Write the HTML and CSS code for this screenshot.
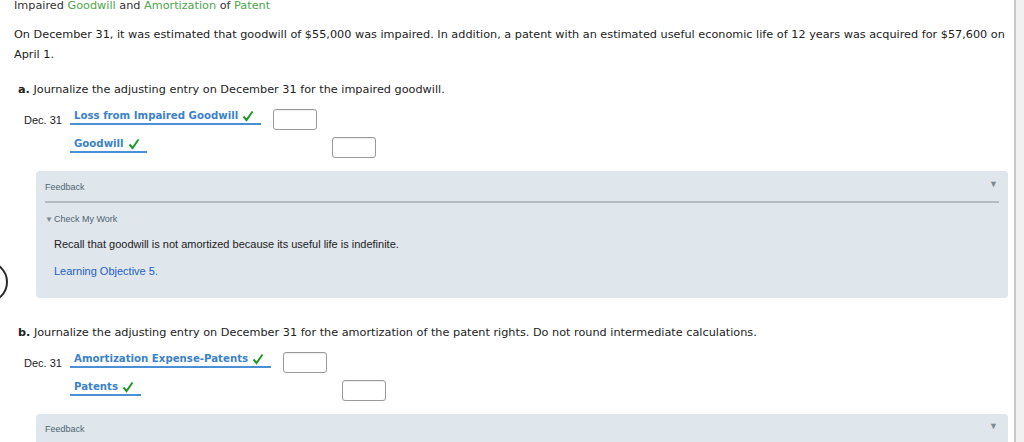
FILE: index.html
```html
<!DOCTYPE html>
<html>
<head>
<meta charset="utf-8">
<link rel="stylesheet" href="styles.css">
</head>
<body>
<div class="page">
  <div class="ring"></div>
  <div class="content">
    <h1 class="title">Impaired <span class="kw">Goodwill</span> and <span class="kw">Amortization</span> of <span class="kw">Patent</span></h1>
    <p class="intro">On December 31, it was estimated that goodwill of $55,000 was impaired. In addition, a patent with an estimated useful economic life of 12 years was acquired for $57,600 on April 1.</p>

    <p class="question"><b>a.</b> Journalize the adjusting entry on December 31 for the impaired goodwill.</p>
    <div class="journal">
      <div class="date">Dec. 31</div>
      <div class="acct">Loss from Impaired Goodwill <svg class="check" viewBox="0 0 12 12"><path d="M1.5 6.5 L4.5 10 L10.5 1.5" /></svg></div>
      <div class="box debit"></div>
      <div class="date"></div>
      <div class="acct">Goodwill <svg class="check" viewBox="0 0 12 12"><path d="M1.5 6.5 L4.5 10 L10.5 1.5" /></svg></div>
      <div class="box credit"></div>
    </div>

    <div class="feedback">
      <div class="fb-head"><span>Feedback</span><span class="tri">▼</span></div>
      <div class="fb-body">
        <div class="cmw"><span class="tri-s">▼</span>Check My Work</div>
        <p class="fb-text">Recall that goodwill is not amortized because its useful life is indefinite.</p>
        <p class="fb-link">Learning Objective 5.</p>
      </div>
    </div>

    <p class="question q-b"><b>b.</b> Journalize the adjusting entry on December 31 for the amortization of the patent rights. Do not round intermediate calculations.</p>
    <div class="journal journal-b">
      <div class="date">Dec. 31</div>
      <div class="acct">Amortization Expense-Patents <svg class="check" viewBox="0 0 12 12"><path d="M1.5 6.5 L4.5 10 L10.5 1.5" /></svg></div>
      <div class="box debit"></div>
      <div class="date"></div>
      <div class="acct">Patents <svg class="check" viewBox="0 0 12 12"><path d="M1.5 6.5 L4.5 10 L10.5 1.5" /></svg></div>
      <div class="box credit"></div>
    </div>

    <div class="feedback feedback-2">
      <div class="fb-head"><span>Feedback</span><span class="tri">▼</span></div>
    </div>
  </div>
</div>
</body>
</html>
```

FILE: styles.css
```css
html { background: #f1f1f1; }
body {
  margin: 0;
  font-family: "DejaVu Sans", Verdana, sans-serif;
  font-size: 11.25px;
  color: #222;
  overflow: hidden;
  height: 442px;
}
.page {
  position: relative;
  width: 1014px;
  height: 442px;
  background: #fff;
  border-right: 2px solid #c9c9c9;
  overflow: hidden;
}
.ring {
  position: absolute;
  left: -34px;
  top: 261px;
  width: 38px;
  height: 38px;
  border: 2px solid #2a2a2a;
  border-radius: 50%;
}
.content {
  padding: 0 6px 0 14px;
}
.title {
  margin: 0;
  font-size: 11.25px;
  font-weight: normal;
  line-height: 12px;
  color: #333;
}
.kw { color: #4ea54e; }
.intro {
  margin: 13px 0 0;
  line-height: 20px;
}
.question {
  margin: 15px 0 0 4px;
  line-height: 20px;
}
.question b { font-weight: bold; }
.q-b { margin-top: 25px; }

.journal {
  display: grid;
  grid-template-columns: 38px auto 44px 44px;
  grid-auto-rows: 28px;
  column-gap: 12px;
  justify-content: start;
  margin: 5px 0 0 10px;
  align-items: center;
}
.journal-b { margin-top: 5px; }
.date {
  grid-column: 1;
  white-space: nowrap;
  font-family: "Liberation Sans", Arial, sans-serif;
  font-size: 11px;
  color: #222;
  padding-top: 1px;
}
.acct {
  grid-column: 2;
  justify-self: start;
  white-space: nowrap;
  margin-left: -4px;
  padding: 0 7px 1px 4px;
  border-bottom: 2px solid #4a90d6;
  color: #3c82c8;
  font-weight: bold;
  font-size: 10.2px;
  line-height: 13px;
  display: flex;
  align-items: flex-end;
  gap: 4px;
  margin-top: -5px;
}
.check {
  width: 12px;
  height: 12px;
  fill: none;
  stroke: #1f9a2a;
  stroke-width: 2;
}
.box {
  width: 42px;
  height: 19px;
  border: 1px solid #9a9a9a;
  border-radius: 3px;
  box-shadow: inset 0 1px 1px rgba(0,0,0,0.08);
  background: #fff;
}
.debit { grid-column: 3; }
.credit { grid-column: 4; margin-left: 3px; }

.feedback {
  margin: 10px 0 0 22px;
  background: #dfe6ec;
  border-radius: 4px;
  padding: 0 9px 0 9px;
  height: 127px;
  font-family: "Liberation Sans", Arial, sans-serif;
}
.feedback-2 { margin-top: 10px; height: 40px; }
.fb-head {
  display: flex;
  justify-content: space-between;
  align-items: center;
  height: 29px;
  padding-top: 1px;
  border-bottom: 2px solid #b3bcc3;
  font-size: 9px;
  color: #4e6570;
}
.feedback-2 .fb-head { border-bottom: none; height: 27px; }
.tri {
  font-size: 9px;
  color: #7f8a90;
  margin-right: 1px;
  margin-top: -5px;
}
.fb-body { padding-top: 10px; }
.cmw {
  font-size: 9px;
  color: #4e6570;
  line-height: 12px;
}
.tri-s { font-size: 8px; color: #7f8a90; margin-right: 1px; }
.fb-text {
  margin: 11px 0 0 9px;
  font-size: 11px;
  line-height: 14px;
  color: #222;
}
.fb-link {
  margin: 13px 0 0 9px;
  font-size: 11px;
  line-height: 14px;
  color: #1d5fc4;
}
```
